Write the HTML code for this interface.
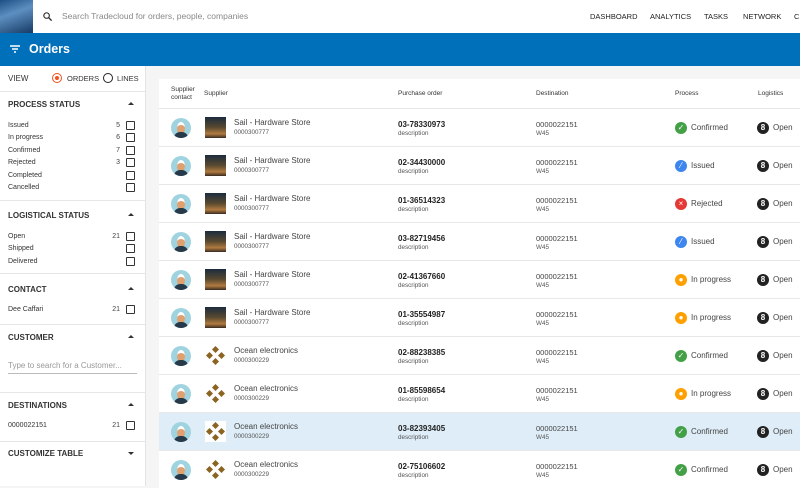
<!DOCTYPE html>
<html><head><meta charset="utf-8"><style>
*{box-sizing:border-box;margin:0;padding:0}
body{width:800px;height:486px;overflow:hidden;font-family:"Liberation Sans",sans-serif;background:#f5f5f5;position:relative;color:#333}
.abs{position:absolute}
#top{left:0;top:0;width:800px;height:33px;background:#fff}
#logo{left:0;top:0;width:33px;height:33px;background:linear-gradient(160deg,#1d4f86,#5d8fc0 40%,#163a66)}
#blue{left:0;top:33px;width:800px;height:33px;background:#0070bb}
#side{left:0;top:66px;width:146px;height:420px;background:#fff;border-right:1px solid #e3e3e3}
.sh{position:absolute;left:8px;font-size:8px;font-weight:bold;color:#333}
.car{position:absolute;left:128px;width:0;height:0;border-left:3px solid transparent;border-right:3px solid transparent}
.up{border-bottom:3px solid #333}.dn{border-top:3px solid #333}
.sep{position:absolute;left:0;width:145px;height:1px;background:#e6e6e6}
.it{position:absolute;left:8px;font-size:7px;color:#333}
.cnt{position:absolute;left:112px;font-size:7px;color:#444;width:8px;text-align:right}
.cb{position:absolute;left:126px;width:9px;height:9px;border:1.5px solid #333;border-radius:1px}
#card{left:159px;top:79px;width:641px;height:407px;background:#fff}
.hd{position:absolute;font-size:6.5px;color:#333}
.row{position:absolute;left:159px;width:641px;height:38px;border-top:1px solid #e8e8e8;background:#fff}
.row.sel{background:#deedf7}
.av{position:absolute;left:12px;top:9px;width:20px;height:20px;border-radius:50%;background:#9fd3e0;overflow:hidden}
.av:before{content:"";position:absolute;left:6px;top:4px;width:8px;height:9px;border-radius:50%;background:#e0a070;border-top:3px solid #fff}
.av:after{content:"";position:absolute;left:3px;top:14px;width:14px;height:8px;border-radius:6px 6px 0 0;background:#263a4a}
.lg{position:absolute;left:46px;top:8px;width:21px;height:21px}
.img{background:linear-gradient(180deg,#1b2c3e,#5a4a30 50%,#b07a40 80%,#3a2a20)}
.dia{background:#fff}
.nm{position:absolute;left:75px;top:9px;font-size:8px;color:#444}
.sub{position:absolute;font-size:6.3px;color:#555}
.po{position:absolute;left:239px;top:11px;font-size:8px;font-weight:bold;color:#222}
.de{position:absolute;left:377px;top:11px;font-size:7.5px;color:#444}
.pi{position:absolute;left:516px;top:13px;width:12px;height:12px;border-radius:50%;color:#fff;font-size:8px;line-height:12px;text-align:center}
.pt{position:absolute;left:532px;top:13px;font-size:8px;line-height:12px;color:#444}
.li{position:absolute;left:598px;top:13px;width:12px;height:12px;border-radius:50%;background:#222;color:#fff;font-size:8px;line-height:12px;text-align:center;font-weight:bold}
.lt{position:absolute;left:614px;top:13px;font-size:8px;line-height:12px;color:#444}
.nav{position:absolute;top:12px;font-size:7.5px;color:#222}
</style></head><body>
<div class="abs" id="top"></div>
<div class="abs" id="logo"></div>
<svg class="abs" style="left:42px;top:11px" width="11" height="11" viewBox="0 0 24 24"><circle cx="10" cy="10" r="6" fill="none" stroke="#333" stroke-width="2.5"/><path d="M14.5 14.5L21 21" stroke="#333" stroke-width="3"/></svg>
<div class="abs" style="left:62px;top:11px;font-size:8.5px;color:#888">Search Tradecloud for orders, people, companies</div>
<div class="nav" style="left:590px">DASHBOARD</div>
<div class="nav" style="left:650px">ANALYTICS</div>
<div class="nav" style="left:704px">TASKS</div>
<div class="nav" style="left:743px">NETWORK</div>
<div class="nav" style="left:794px">C</div>
<div class="abs" id="blue"></div>
<svg class="abs" style="left:10px;top:45px" width="10" height="8" viewBox="0 0 10 8"><path d="M0 1h10M2 4h6M4 7h2" stroke="#fff" stroke-width="1.4"/></svg>
<div class="abs" style="left:29px;top:42px;font-size:12.5px;font-weight:bold;color:#fff">Orders</div>
<div class="abs" id="side">
<div class="sh" style="top:8px;font-weight:normal">VIEW</div>
<div style="position:absolute;left:52px;top:7px;width:10px;height:10px;border:1.5px solid #f4511e;border-radius:50%"><div style="margin:1.5px;width:4px;height:4px;background:#f4511e;border-radius:50%"></div></div>
<div class="it" style="left:67px;top:8px;font-size:7.5px">ORDERS</div>
<div style="position:absolute;left:103px;top:7px;width:10px;height:10px;border:1.5px solid #222;border-radius:50%"></div>
<div class="it" style="left:117px;top:8px;font-size:7.5px">LINES</div>
<div class="sep" style="top:25px"></div>
<div class="sh" style="top:34px">PROCESS STATUS</div><div class="car up" style="top:36px"></div>
<div class="it" style="top:56px">Issued</div><div class="cnt" style="top:56px">5</div><div class="cb" style="top:55px"></div>
<div class="it" style="top:68px">In progress</div><div class="cnt" style="top:68px">6</div><div class="cb" style="top:67px"></div>
<div class="it" style="top:81px">Confirmed</div><div class="cnt" style="top:81px">7</div><div class="cb" style="top:80px"></div>
<div class="it" style="top:93px">Rejected</div><div class="cnt" style="top:93px">3</div><div class="cb" style="top:92px"></div>
<div class="it" style="top:106px">Completed</div><div class="cb" style="top:105px"></div>
<div class="it" style="top:118px">Cancelled</div><div class="cb" style="top:117px"></div>
<div class="sep" style="top:134px"></div>
<div class="sh" style="top:145px">LOGISTICAL STATUS</div><div class="car up" style="top:147px"></div>
<div class="it" style="top:167px">Open</div><div class="cnt" style="top:167px">21</div><div class="cb" style="top:166px"></div>
<div class="it" style="top:179px">Shipped</div><div class="cb" style="top:178px"></div>
<div class="it" style="top:192px">Delivered</div><div class="cb" style="top:191px"></div>
<div class="sep" style="top:207px"></div>
<div class="sh" style="top:219px">CONTACT</div><div class="car up" style="top:221px"></div>
<div class="it" style="top:240px">Dee Caffari</div><div class="cnt" style="top:240px">21</div><div class="cb" style="top:239px"></div>
<div class="sep" style="top:258px"></div>
<div class="sh" style="top:267px">CUSTOMER</div><div class="car up" style="top:269px"></div>
<div class="it" style="top:295px;font-size:8px;color:#999">Type to search for a Customer...</div>
<div style="position:absolute;left:8px;top:307px;width:129px;height:1px;background:#bbb"></div>
<div class="sep" style="top:326px"></div>
<div class="sh" style="top:335px">DESTINATIONS</div><div class="car up" style="top:337px"></div>
<div class="it" style="top:356px">0000022151</div><div class="cnt" style="top:356px">21</div><div class="cb" style="top:355px"></div>
<div class="sep" style="top:375px"></div>
<div class="sh" style="top:383px">CUSTOMIZE TABLE</div><div class="car dn" style="top:386px"></div>
</div>
<div class="abs" id="card"></div>
<div class="hd" style="left:171px;top:86px;line-height:8px">Supplier<br>contact</div>
<div class="hd" style="left:204px;top:90px">Supplier</div>
<div class="hd" style="left:398px;top:90px">Purchase order</div>
<div class="hd" style="left:536px;top:90px">Destination</div>
<div class="hd" style="left:675px;top:90px">Process</div>
<div class="hd" style="left:758px;top:90px">Logistics</div>
<div id="rows"></div>
<script>
var d=[["S","03-78330973","c"],["S","02-34430000","i"],["S","01-36514323","r"],["S","03-82719456","i"],["S","02-41367660","p"],["S","01-35554987","p"],["O","02-88238385","c"],["O","01-85598654","p"],["O","03-82393405","c"],["O","02-75106602","c"]];
var st={c:["#43a047","✓","Confirmed"],i:["#3d86f0","⁄","Issued"],r:["#e53935","×","Rejected"],p:["#ffa000","●","In progress"]};
var dia='<svg width="21" height="21" viewBox="0 0 21 21"><g fill="#8a6420"><path d="M10.5 1l3.5 3.5-3.5 3.5-3.5-3.5z"/><path d="M4.5 7l3.5 3.5-3.5 3.5-3.5-3.5z"/><path d="M16.5 7l3.5 3.5-3.5 3.5-3.5-3.5z"/><path d="M10.5 13l3.5 3.5-3.5 3.5-3.5-3.5z"/></g></svg>';
var h="";
d.forEach(function(r,k){var s=st[r[2]];var S=r[0]=="S";
h+='<div class="row'+(k==8?' sel':'')+'" style="top:'+(108+k*38)+'px"><div class="av"></div><div class="lg '+(S?'img':'dia')+'">'+(S?'':dia)+'</div>'+
'<div class="nm">'+(S?'Sail - Hardware Store':'Ocean electronics')+'</div><div class="sub" style="left:75px;top:20px">'+(S?'0000300777':'0000300229')+'</div>'+
'<div class="po">'+r[1]+'</div><div class="sub" style="left:239px;top:21px">description</div>'+
'<div class="de">0000022151</div><div class="sub" style="left:377px;top:21px">W45</div>'+
'<div class="pi" style="background:'+s[0]+'">'+s[1]+'</div><div class="pt">'+s[2]+'</div>'+
'<div class="li">8</div><div class="lt">Open</div></div>';});
document.getElementById("rows").innerHTML=h;
</script>
</body></html>
